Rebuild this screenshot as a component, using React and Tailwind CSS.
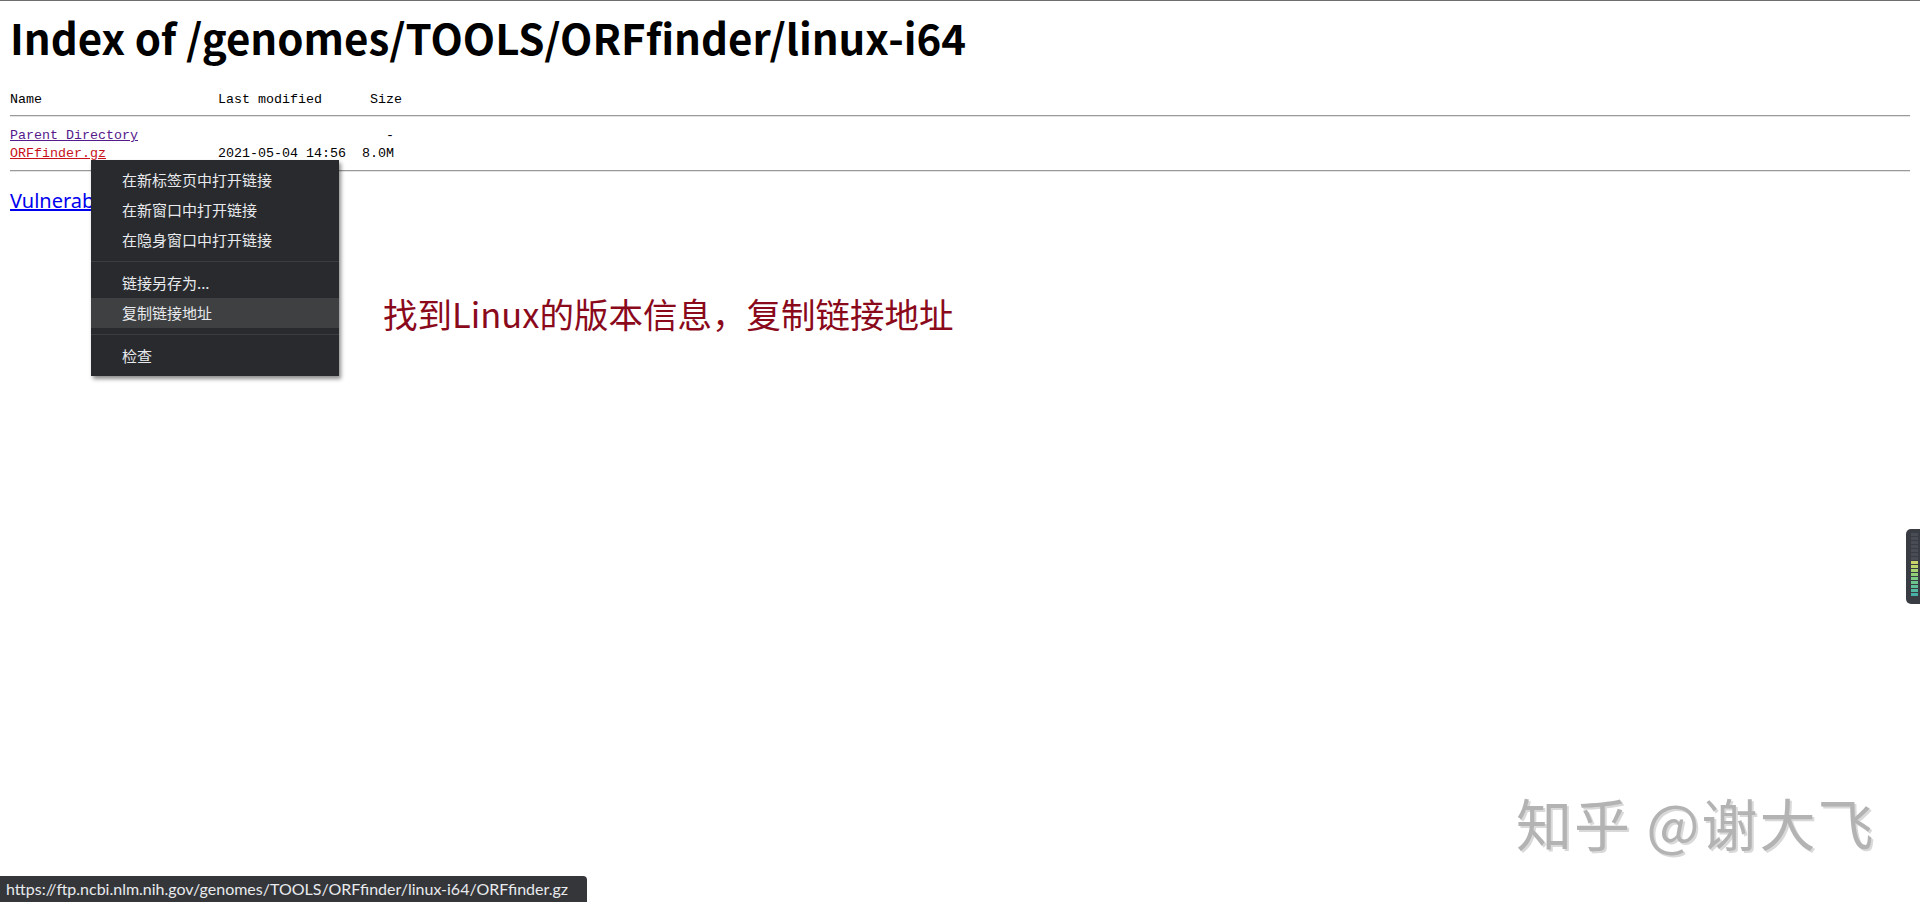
import React from 'react';

const menuGroups = [
  ['在新标签页中打开链接', '在新窗口中打开链接', '在隐身窗口中打开链接'],
  ['链接另存为...', '复制链接地址'],
  ['检查'],
];

const mono = { fontFamily: '"Liberation Mono", "DejaVu Sans Mono", monospace' };

function ContextMenu() {
  return (
    <div className="absolute left-[91px] top-[159px] w-[248px] bg-[#292a2d] py-[5px] shadow-[2px_3px_4px_rgba(0,0,0,0.45)] font-['Noto_Sans_CJK_SC',sans-serif] text-[15px] text-[#e8eaed]">
      {menuGroups.map((group, gi) => (
        <div key={gi}>
          {gi > 0 && <div className="my-[6px] h-px bg-[#3c3d40]" />}
          {group.map((item) => (
            <div
              key={item}
              className={`h-[30px] flex items-center pl-[31px] ${item === '复制链接地址' ? 'bg-[#3f4042]' : ''}`}
            >
              {item}
            </div>
          ))}
        </div>
      ))}
    </div>
  );
}

function LevelMeter() {
  const ticks = [
    '#4a4c55', '#4a4c55', '#4a4c55', '#4a4c55', '#4a4c55', '#4a4c55', '#4a4c55',
    '#c9d36a', '#b8d46a', '#a6d46e', '#8fd078', '#7ccb82', '#6cc58c', '#5fbf96', '#52b8a0', '#47b0a6',
  ];
  return (
    <div className="absolute right-0 top-[528px] w-[14px] h-[75px] rounded-l-[5px] bg-[#3a3c44] flex flex-col items-center pt-[4px] gap-[1px]">
      {ticks.map((c, i) => (
        <div key={i} className="w-[7px] h-[3px] ml-[2px]" style={{ backgroundColor: c }} />
      ))}
    </div>
  );
}

export default function App() {
  return (
    <div className="relative w-[1920px] h-[902px] overflow-hidden bg-white border-t border-[#6e6e6e]">
      <div className="px-[10px]">
        <h1 className="pt-[10px] text-[42px] leading-[52px] font-bold text-black font-['Noto_Sans_CJK_SC',sans-serif]">
          Index of /genomes/TOOLS/ORFfinder/linux-i64
        </h1>

        <pre className="mt-[28px] text-[13.33px] leading-[18px] text-black" style={mono}>
          {'Name                      Last modified      Size'}
        </pre>
        <div className="mt-[6px] h-[2px] border-t border-[#9a9a9a] border-b border-b-[#e4e4e4]" />
        <pre className="mt-[10px] text-[13.33px] leading-[18px] text-black" style={mono}>
          <a className="underline text-[#551a8b]">Parent Directory</a>
          {'                               -\n'}
          <a className="underline text-[#c8101b]">ORFfinder.gz</a>
          {'              2021-05-04 14:56  8.0M'}
        </pre>
        <div className="mt-[7px] h-[2px] border-t border-[#9a9a9a] border-b border-b-[#e4e4e4]" />
        <div className="mt-[16px] text-[20px] leading-[26px] font-['Noto_Sans',sans-serif]">
          <a className="underline text-[#0000ee]">Vulnerability Disclosure</a>
        </div>
      </div>

      <ContextMenu />

      <div className="absolute left-[383px] top-[289px] text-[34.5px] leading-[46px] text-[#8a0a1c] font-['Noto_Sans_CJK_SC',sans-serif]">
        找到Linux的版本信息，复制链接地址
      </div>

      <div className="absolute left-[1516px] top-[787px] text-[56px] leading-[68px] tracking-[2px] whitespace-nowrap text-[#b3b3b3] font-['Noto_Sans_CJK_SC',sans-serif] [text-shadow:2px_2px_0_#d9d9d9]">
        知乎 @谢大飞
      </div>

      <LevelMeter />

      <div className="absolute left-0 bottom-0 h-[26px] w-[587px] rounded-tr-[4px] bg-[#35363a] pl-[6px] flex items-center whitespace-nowrap text-[16px] text-[#e8eaed] font-['Lato',sans-serif]">
        https://ftp.ncbi.nlm.nih.gov/genomes/TOOLS/ORFfinder/linux-i64/ORFfinder.gz
      </div>
    </div>
  );
}
